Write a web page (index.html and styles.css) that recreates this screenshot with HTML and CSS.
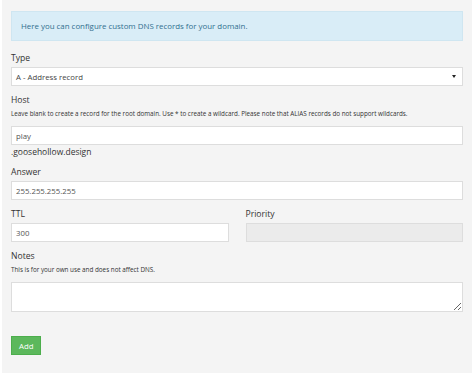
FILE: index.html
```html
<!DOCTYPE html>
<html lang="en">
<head>
  <meta charset="UTF-8">
  <title>DNS Records</title>
  <link rel="stylesheet" href="styles.css">
</head>
<body>

  <form class="panel" onsubmit="return false">
    <div class="alert">Here you can configure custom DNS records for your domain.</div>

    <!-- Type -->
    <div class="group">
      <label>Type</label>
      <div class="select">
        <span>A - Address record</span>
        <span class="caret"></span>
      </div>
    </div>

    <!-- Host -->
    <div class="group">
      <label>Host</label>
      <p class="help">Leave blank to create a record for the root domain. Use * to create a wildcard. Please note that ALIAS records do not support wildcards.</p>
      <input type="text" value="play">
      <div class="suffix">.goosehollow.design</div>
    </div>

    <!-- Answer -->
    <div class="group">
      <label>Answer</label>
      <input type="text" value="255.255.255.255">
    </div>

    <div class="group row">
      <div>
        <label>TTL</label>
        <input type="text" value="300">
      </div>
      <div>
        <label>Priority</label>
        <input type="text" disabled>
      </div>
    </div>

    <!-- Notes -->
    <div class="group">
      <label>Notes</label>
      <p class="help">This is for your own use and does not affect DNS.</p>
      <textarea></textarea>
    </div>

    <button type="submit">Add</button>
  </form>

</body>
</html>
```

FILE: styles.css
```css
body {
  margin: 0;
  background: #fff;
  font-family: "Open Sans", Arial, sans-serif;
  color: #333;
}

.panel {
  margin: 0 2px;
  padding: 11px 9px 18px;
  background: #f4f4f4;
}

.alert {
  height: 30px;
  box-sizing: border-box;
  padding: 0 9px;
  line-height: 28px;
  font-size: 7.9px;
  color: #31708f;
  background: #d9edf7;
  border: 1px solid #cfe6f1;
  margin-bottom: 11px;
}

.group {
  margin-bottom: 8px;
}

label {
  display: block;
  font-size: 8.6px;
  line-height: 12px;
  margin-bottom: 3px;
  color: #333;
}

.help {
  margin: 1px 0 7px;
  font-size: 6.3px;
  line-height: 10px;
  color: #333;
}

input[type="text"],
.select,
textarea {
  display: block;
  width: 100%;
  height: 19px;
  box-sizing: border-box;
  padding: 0 4px;
  margin: 0;
  font-family: "Open Sans", Arial, sans-serif;
  font-size: 7.8px;
  color: #555;
  background: #fff;
  border: 1px solid #ddd;
  border-radius: 0;
  outline: none;
}

.select {
  display: flex;
  align-items: center;
  justify-content: space-between;
  color: #444;
}

.caret {
  width: 0;
  height: 0;
  margin-right: 2px;
  border-left: 2px solid transparent;
  border-right: 2px solid transparent;
  border-top: 3px solid #222;
}

input[disabled] {
  background: #ebebeb;
}

.suffix {
  font-size: 8.5px;
  line-height: 12px;
  margin: 1px 0 7px;
  color: #333;
}

.row {
  display: grid;
  grid-template-columns: 1fr 1fr;
  column-gap: 17px;
}

textarea {
  height: 30px;
  resize: vertical;
}

button {
  display: block;
  margin-top: 24px;
  height: 19px;
  padding: 0 7px;
  font-family: "Open Sans", Arial, sans-serif;
  font-size: 7.8px;
  color: #fff;
  background: #5cb85c;
  border: 1px solid #4cae4c;
  border-radius: 0;
  cursor: pointer;
}
```
